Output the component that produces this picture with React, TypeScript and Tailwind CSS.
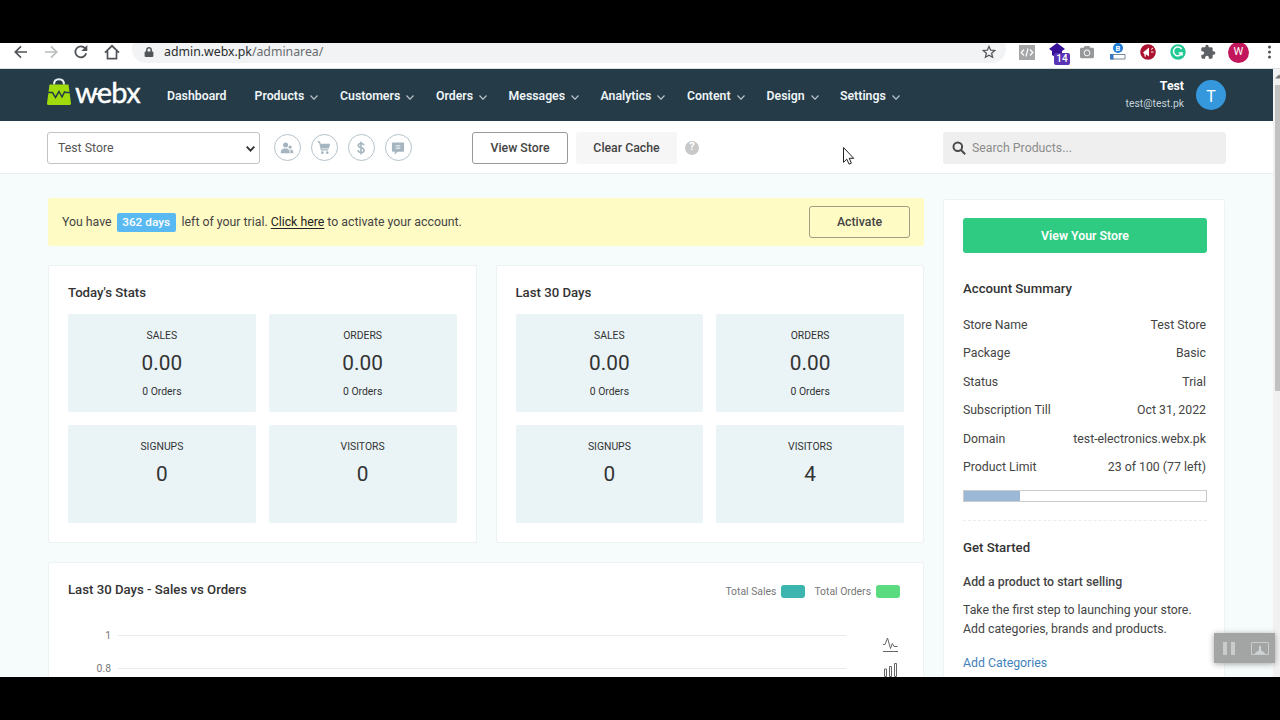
import type { ReactNode } from "react";
import clsx from "clsx";
import { FaCamera, FaLock } from "react-icons/fa";
import { MdExtension } from "react-icons/md";

type NavItem = { label: string; width: string; menu?: boolean };

const navItems: NavItem[] = [
  { label: "Dashboard", width: "w-[87.5px]" },
  { label: "Products", width: "w-[85.5px]", menu: true },
  { label: "Customers", width: "w-24", menu: true },
  { label: "Orders", width: "w-[72.5px]", menu: true },
  { label: "Messages", width: "w-[92px]", menu: true },
  { label: "Analytics", width: "w-[86.5px]", menu: true },
  { label: "Content", width: "w-[79.5px]", menu: true },
  { label: "Design", width: "w-[73.5px]", menu: true },
  { label: "Settings", width: "w-[82px]", menu: true },
];

const todayStats = [
  { label: "SALES", value: "0.00", note: "0 Orders" },
  { label: "ORDERS", value: "0.00", note: "0 Orders" },
  { label: "SIGNUPS", value: "0" },
  { label: "VISITORS", value: "0" },
];

const monthStats = [
  { label: "SALES", value: "0.00", note: "0 Orders" },
  { label: "ORDERS", value: "0.00", note: "0 Orders" },
  { label: "SIGNUPS", value: "0" },
  { label: "VISITORS", value: "4" },
];

const summary = [
  ["Store Name", "Test Store"],
  ["Package", "Basic"],
  ["Status", "Trial"],
  ["Subscription Till", "Oct 31, 2022"],
  ["Domain", "test-electronics.webx.pk"],
  ["Product Limit", "23 of 100 (77 left)"],
];

function BrowserBar() {
  return (
    <div className="relative h-[26px] shrink-0 overflow-hidden border-b border-[#dcdfe0] bg-white">
      <div className="flex h-[18px] items-center">
        <svg className="ml-[13px] h-4 w-4" viewBox="0 0 16 16" fill="none" stroke="#505357" strokeWidth="1.7">
          <path d="M14 8H2.5M8 2.3 2.3 8 8 13.7" />
        </svg>
        <svg className="ml-[14px] h-4 w-4" viewBox="0 0 16 16" fill="none" stroke="#b9bbbd" strokeWidth="1.7">
          <path d="M2 8h11.5M8 2.3 13.7 8 8 13.7" />
        </svg>
        <svg className="ml-[14px] h-4 w-4" viewBox="0 0 16 16" fill="none" stroke="#505357" strokeWidth="1.8">
          <path d="M13.2 9.2A5.5 5.5 0 1 1 12 4.2" />
          <path d="M14.3 1v6h-6z" fill="#505357" stroke="none" />
        </svg>
        <svg className="ml-[15px] h-4 w-4" viewBox="0 0 16 16" fill="none" stroke="#505357" strokeWidth="1.7">
          <path d="M1 8.6 8 1.8l7 6.8M3.500 7v7.600h9V7" />
        </svg>
        <div className="-mt-[6px] ml-[12px] flex h-[28px] w-[874px] items-center rounded-full bg-[#f1f3f4] pl-[12px] pt-[6px]">
          <FaLock className="size-[10px] text-[#505357]" />
          <span className="ml-[10px] font-['Noto_Sans','Open_Sans',sans-serif] text-[12.3px] text-[#2b2d30]">
            admin.webx.pk<span className="text-[#696c70]">/adminarea/</span>
          </span>
          <svg className="mr-[10px] ml-auto size-[14px]" viewBox="0 0 16 16" fill="none" stroke="#505357" strokeWidth="1.4">
            <path d="m8 1.600 1.900 4.300 4.700.4-3.600 3.100 1.100 4.600L8 11.600 3.900 14 5 9.400 1.400 6.300l4.700-.4z" />
          </svg>
        </div>
        <svg className="ml-[13px] h-[15px] w-4" viewBox="0 0 16 15">
          <path d="M0 0h16v15H0z" fill="#a5a7a8" />
          <path d="M5 4.500 2.200 7.500 5 10.500M11 4.500l2.800 3-2.800 3M9 3.500l-2 8" fill="none" stroke="#fff" strokeWidth="1.200" />
        </svg>
        <div className="relative ml-[14px] h-[18px] w-[22px]">
          <svg className="size-full" viewBox="0 0 22 18">
            <path d="M8 0 16 6 13 8v4l-5 3-5-3V8L0 6z" fill="#37109a" />
          </svg>
          <span className="absolute top-[10px] left-[5px] h-[12px] w-[16px] rounded-[2px] bg-[#5935b5] text-center font-['Roboto',sans-serif] text-[10px] leading-[12px] font-medium text-white">
            14
          </span>
        </div>
        <FaCamera className="ml-[9px] size-[14px] text-[#969899]" />
        <svg className="ml-[16px] h-[17px] w-4 overflow-visible" viewBox="0 0 16 17">
          <circle cx="8" cy="4" r="5" fill="#1d7bd8" />
          <text x="8" y="6.800" textAnchor="middle" fill="#fff" fontSize="7.500" fontWeight="700" fontFamily="Roboto, sans-serif">B</text>
          <path d="M1 10.500h14v4.500H1z" fill="#fff" stroke="#79899a" strokeWidth="1" />
          <path d="M0 10h3.500v5.500H0z" fill="#3979c2" />
        </svg>
        <svg className="ml-[14px] size-4" viewBox="0 0 16 16">
          <circle cx="8" cy="8" r="7.800" fill="#aa1230" />
          <path d="m3 8.500 6-5v9L5.500 10 6 12.500 4.800 12.700 4.200 10z" fill="#fff" />
          <path d="M11 5.500 13 4M11 8h2.500" stroke="#fff" />
        </svg>
        <svg className="ml-[14px] size-4" viewBox="0 0 16 16">
          <circle cx="8" cy="8" r="7.700" fill="#24c894" />
          <path d="M11.600 5A4.400 4.400 0 1 0 12 9H8.600M12 8.600v3" fill="none" stroke="#fff" strokeWidth="1.500" />
        </svg>
        <MdExtension className="ml-[14px] size-[16px] text-[#5d6064]" />
        <span className="ml-[12px] flex size-[21px] shrink-0 items-center justify-center rounded-full bg-[#c2185b] font-['Roboto',sans-serif] text-[11px] text-white">
          W
        </span>
        <svg className="ml-[18px] h-4 w-[5px] shrink-0" viewBox="0 0 5 16" fill="#505357">
          <circle cx="2.500" cy="3" r="1.500" />
          <circle cx="2.500" cy="8" r="1.500" />
          <circle cx="2.500" cy="13" r="1.500" />
        </svg>
      </div>
    </div>
  );
}

function Logo() {
  return (
    <div className="flex h-full w-[120px] items-start">
      <svg className="mt-[9px] h-[28px] w-[24px] shrink-0" viewBox="0 0 24 28">
        <path d="M7 6.500C7 3 9 1.200 12 1.200S17 3 17 6.500" fill="none" stroke="#e6eff2" strokeWidth="2" />
        <path d="M2.500 6.500h19L24 25.500q.1 1.500-1.500 1.500h-21Q-.1 27 0 25.500z" fill="#a0dc0c" />
        <path d="M0 14.500h5.500l3 5L12 13.500l3 5.500 2.500-5 1.500.5h5" fill="none" stroke="#253b48" strokeWidth="1.500" />
      </svg>
      <span className="relative ml-[4px] font-['Lato',sans-serif] text-[29px] leading-[46px] tracking-[-0.800px] text-white [-webkit-text-stroke:0.400px_white]">
        webx
        <span className="absolute top-[24px] left-[19px] h-[2px] w-[8px] bg-white" />
      </span>
    </div>
  );
}

function NavBar() {
  return (
    <nav className="flex h-[52px] shrink-0 bg-[#253b48] pl-[47px]">
      <Logo />
      <div className="flex items-center pt-[3px]">
        {navItems.map((item) => (
          <div key={item.label} className={clsx("flex items-center text-[12.3px] font-semibold text-[#eef4f6]", item.width)}>
            {item.label}
            {item.menu && (
              <svg className="mt-px ml-[6px] h-[5px] w-[8px]" viewBox="0 0 8 5" fill="none" stroke="#b9c5cb" strokeWidth="1.200">
                <path d="M.5.500 4 4.200 7.500.5" />
              </svg>
            )}
          </div>
        ))}
      </div>
      <div className="mr-[47px] ml-auto flex items-center">
        <div className="text-right">
          <div className="text-[12.3px] leading-[17px] font-bold text-white">Test</div>
          <div className="text-[10.4px] leading-[17px] text-[#c6d2d8]">test@test.pk</div>
        </div>
        <span className="ml-3 flex size-[30px] items-center justify-center rounded-full bg-[#3598dc] pt-[3px] text-[16px] text-white">T</span>
      </div>
    </nav>
  );
}

function RoundButton({ children }: { children: ReactNode }) {
  return (
    <span className="flex size-[27px] items-center justify-center rounded-full border border-[#b4c2ca] text-[#a5b5bf]">
      <svg className="size-[14px]" viewBox="0 0 15 15" fill="currentColor">
        {children}
      </svg>
    </span>
  );
}

function Toolbar() {
  return (
    <div className="flex h-[53px] shrink-0 items-center border-b border-[#e8eff1] bg-white pt-px pl-[47px] text-[12.3px]">
      <div className="flex h-8 w-[213px] items-center justify-between rounded-[3px] border border-[#bfc4c8] pt-[2px] pr-[4px] pl-[10px] text-[#555]">
        Test Store
        <svg className="h-[6px] w-[9px]" viewBox="0 0 9 6" fill="none" stroke="#333" strokeWidth="1.900">
          <path d="m.7.7 3.800 3.900L8.300.7" />
        </svg>
      </div>
      <div className="ml-[13.5px] flex gap-[10px]">
        <RoundButton>
          <circle cx="6" cy="4.200" r="2.700" />
          <path d="M.8 13c0-3.500 1.500-5 5.200-5s4.500 1.800 4.500 5z" />
          <circle cx="10.800" cy="6.500" r="1.800" />
          <path d="M11.300 13h3c0-3-.8-4-3.500-4 .5 1 .5 2 .5 4z" />
        </RoundButton>
        <RoundButton>
          <path d="M.5 1h2.200l2.100 8.500H12" fill="none" stroke="currentColor" strokeWidth="1.300" />
          <path d="M3.400 3h10.800l-1.500 5H4.600z" />
          <circle cx="5.800" cy="12.500" r="1.400" />
          <circle cx="11" cy="12.500" r="1.400" />
        </RoundButton>
        <RoundButton>
          <path d="M10.700 4.600C10.200 3.200 9.200 2.600 7.500 2.600 5.700 2.600 4.600 3.500 4.600 4.800c0 3.200 6.200 1.700 6.200 5 0 1.500-1.300 2.500-3.200 2.500-1.800 0-3-.8-3.500-2.300M7.500.5v14" fill="none" stroke="currentColor" strokeWidth="1.700" />
        </RoundButton>
        <RoundButton>
          <path d="M2 1.500h11q1 0 1 1v8q0 1-1 1H7l-3 3v-3H2q-1 0-1-1v-8q0-1 1-1z" />
          <path d="M5 5.200h5M5 7.700h5" stroke="#fff" />
        </RoundButton>
      </div>
      <button className="ml-[60.5px] h-8 w-24 rounded-[3px] border border-[#999] pt-[2px] font-medium text-[#444]">View Store</button>
      <button className="ml-2 h-8 w-[101px] rounded-[3px] bg-[#f6f6f6] pt-[2px] font-medium text-[#444]">Clear Cache</button>
      <span className="ml-2 flex size-[14px] items-center justify-center rounded-full bg-[#c8c8c8] text-[11px] font-bold text-white">?</span>
      <div className="mr-[47px] ml-auto flex h-8 w-[283px] items-center rounded-[3px] bg-[#efefef] pt-[2px] pl-[9px] text-[#8b8b8b]">
        <svg className="-mt-px mr-[6px] size-[14px]" viewBox="0 0 14 14" fill="none" stroke="#4b4b4b" strokeWidth="2">
          <circle cx="5.800" cy="5.800" r="4.300" />
          <path d="m9 9 4.200 4.200" />
        </svg>
        Search Products...
      </div>
    </div>
  );
}

function TrialNotice() {
  return (
    <div className="flex h-[48px] items-center rounded-[2px] bg-[#fffbc4] pr-[14px] pl-[14px] text-[12.3px] text-[#444]">
      <span>You have</span>
      <span className="mr-[5px] ml-[5px] flex h-[19px] w-[59px] items-center justify-center rounded-[2px] bg-[#59b9f2] pt-px text-[11.8px] font-medium text-white">
        362 days
      </span>
      <span className="ml-px">
        left of your trial. <a className="text-[#222] underline underline-offset-2">Click here</a> to activate your account.
      </span>
      <button className="ml-auto h-8 w-[101px] rounded-[3px] border border-[#9f9d82] font-medium">Activate</button>
    </div>
  );
}

function StatsCard({ title, stats }: { title: string; stats: { label: string; value: string; note?: string }[] }) {
  return (
    <section className="h-[278px] w-[428.5px] rounded-[2px] border border-[#ebf3f4] bg-white px-[19px] pt-[17px]">
      <h2 className="text-[13.2px] leading-[20px] font-medium text-[#333]">{title}</h2>
      <div className="mt-[11px] grid grid-cols-2 gap-x-[13px] gap-y-[13px]">
        {stats.map((s) => (
          <div key={s.label} className="h-[98px] rounded-[2px] bg-[#eaf4f7] pt-[14px] text-center text-[#333]">
            <div className="text-[10.4px] leading-[16px]">{s.label}</div>
            <div className="mt-[4px] text-[20.8px] leading-[30px]">{s.value}</div>
            {s.note && <div className="mt-[6px] text-[10.4px] leading-[15px]">{s.note}</div>}
          </div>
        ))}
      </div>
    </section>
  );
}

function ChartCard() {
  return (
    <section className="mt-[19px] h-[200px] w-[876px] rounded-[2px] border border-[#ebf3f4] bg-white px-[19px] pt-[17px]">
      <div className="flex items-center pr-[4px]">
        <h2 className="text-[13.2px] leading-[20px] font-medium text-[#333]">Last 30 Days - Sales vs Orders</h2>
        <div className="mt-[3px] ml-auto flex items-center text-[10.4px] text-[#777]">
          Total Sales
          <span className="mr-[9px] ml-[5px] h-[13px] w-6 rounded-[3px] bg-[#3cb5af]" />
          Total Orders
          <span className="ml-[5px] h-[13px] w-6 rounded-[3px] bg-[#5bdb80]" />
        </div>
      </div>
      <div className="mt-[24px] flex">
        <div className="w-[778px] text-[10.4px] text-[#777]">
          <div className="flex h-[33px] items-start leading-[23px]">
            <span className="w-[43px] text-right">1</span>
            <span className="mt-[11px] ml-[7px] h-px flex-1 bg-[#eaeaea]" />
          </div>
          <div className="flex h-[33px] items-start leading-[23px]">
            <span className="w-[43px] text-right">0.8</span>
            <span className="mt-[11px] ml-[7px] h-px flex-1 bg-[#eaeaea]" />
          </div>
        </div>
        <div className="ml-[37px] flex flex-col gap-[10px] pt-[13px]">
          <svg className="h-[16px] w-[15px]" viewBox="0 0 15 16" fill="none" stroke="#666" strokeWidth="1">
            <path d="M0 7.500h2L4.500 1l3 10.500 1.800-5L11 9.500h3.500M0 14.500h15" />
          </svg>
          <svg className="h-[14px] w-[15px]" viewBox="0 0 15 14" fill="none" stroke="#666" strokeWidth="1">
            <path d="M1.500 6h2v7.500h-2zM6.500 3.500h2v10h-2zM11.500.5h2v13h-2z" />
          </svg>
        </div>
      </div>
    </section>
  );
}

function Sidebar() {
  return (
    <aside className="mt-px h-[600px] w-[282px] rounded-[2px] border border-[#ebf3f4] bg-white px-[19px] pt-[18px] text-[12.3px] text-[#444]">
      <button className="h-[35px] w-[244px] rounded-[3px] bg-[#30cb82] pt-[2px] font-semibold text-white">View Your Store</button>
      <h2 className="mt-[26px] text-[13.2px] leading-[20px] font-medium text-[#333]">Account Summary</h2>
      <div className="mt-[12px] w-[243px]">
        {summary.map(([label, value]) => (
          <div key={label} className="flex h-[28.4px] items-center justify-between">
            <span>{label}</span>
            <span>{value}</span>
          </div>
        ))}
      </div>
      <div className="mt-[8.4px] h-[12px] w-[244px] border border-[#ccc] bg-white">
        <div className="h-full w-[56px] bg-[#9bb9d7]" />
      </div>
      <div className="mt-[18px] w-[244px] border-t border-dashed border-[#e8edef]" />
      <h2 className="mt-[17px] text-[13.2px] leading-[20px] font-medium text-[#333]">Get Started</h2>
      <p className="mt-[15px] leading-[19px] font-medium">Add a product to start selling</p>
      <p className="mt-[9px] leading-[19px]">
        Take the first step to launching your store.
        <br />
        Add categories, brands and products.
      </p>
      <a className="mt-[15px] block leading-[19px] text-[#3f81bd]">Add Categories</a>
    </aside>
  );
}

export default function App() {
  return (
    <div className="relative h-[720px] w-[1280px] overflow-hidden bg-black py-[43px] font-['Roboto',sans-serif]">
      <div className="flex h-[634px] flex-col overflow-hidden bg-[#f6fbfc]">
        <BrowserBar />
        <div className="flex min-h-0 flex-1">
          <div className="flex w-[1273px] flex-col">
            <NavBar />
            <Toolbar />
            <main className="flex min-h-0 flex-1 items-start overflow-hidden pt-6 pl-[48px]">
              <div className="w-[876px]">
                <TrialNotice />
                <div className="mt-[19px] flex gap-[19px]">
                  <StatsCard title="Today's Stats" stats={todayStats} />
                  <StatsCard title="Last 30 Days" stats={monthStats} />
                </div>
                <ChartCard />
              </div>
              <div className="ml-[19px]">
                <Sidebar />
              </div>
            </main>
          </div>
          {/* Page scrollbar */}
          <div className="flex-1 bg-[#f1f1f1]">
            <svg className="mt-[5px] h-[5px] w-[7px]" viewBox="0 0 7 5">
              <path d="M2 4.500 6 .5l4 4z" fill="#777" />
            </svg>
            <div className="mt-[6px] ml-[2px] h-[306px] bg-[#c1c1c1]" />
          </div>
        </div>
      </div>

      {/* Mouse pointer */}
      <svg className="absolute top-[146px] left-[842px] h-[20px] w-[13px]" viewBox="0 0 13 20" fill="#fff" stroke="#222" strokeWidth="1">
        <path d="M1.500 1.500v14.800l3.300-3.100 2.300 5 2.300-1-2.200-4.900h4.500z" />
      </svg>

      {/* Recorder controls */}
      <div className="absolute top-[633px] left-[1214px] flex h-[30px] w-[61px] items-center bg-[#a3a5a5] shadow-[0_1px_6px_rgba(0,0,0,0.35)]">
        <span className="ml-[9px] h-[13px] w-[4px] bg-[#c9cccc]" />
        <span className="ml-[4px] h-[13px] w-[4px] bg-[#c9cccc]" />
        <svg className="ml-[16px] h-[13px] w-[18px]" viewBox="0 0 18 13">
          <path d="M.5.500h17v12H.5z" fill="none" stroke="#c9cccc" />
          <path d="M4 12c0-2 3-2.500 4-4V4h2v4c1 1.500 4 2 4 4z" fill="#d0d3d3" />
        </svg>
      </div>
    </div>
  );
}
